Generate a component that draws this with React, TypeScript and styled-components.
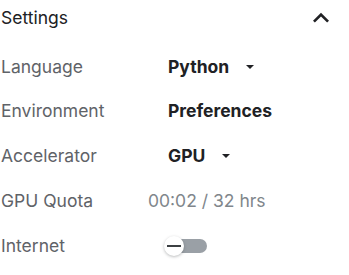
import React, { useState } from 'react';
import styled, { createGlobalStyle } from 'styled-components';

const GlobalStyle = createGlobalStyle`
  body {
    margin: 0;
    background: #ffffff;
    font-family: Inter, 'Noto Sans', sans-serif;
  }
`;

const Panel = styled.section`
  width: 349px;
  padding-left: 1px;
  box-sizing: border-box;
  color: #202124;
`;

const Header = styled.div`
  display: flex;
  align-items: center;
  justify-content: space-between;
  height: 35px;
  margin-bottom: 9.25px;
`;

const Title = styled.h2`
  margin: 0;
  font-size: 17.5px;
  line-height: 24px;
  font-weight: 400;
  color: #202124;
`;

const CollapseButton = styled.button`
  display: flex;
  align-items: center;
  justify-content: center;
  width: 32px;
  height: 32px;
  padding: 0;
  margin-right: 12px;
  border: none;
  background: none;
  color: #202124;
  cursor: pointer;
`;

const Row = styled.div`
  display: grid;
  grid-template-columns: 147px 1fr;
  align-items: center;
  height: 44.75px;
`;

const Label = styled.span`
  font-size: 17.5px;
  line-height: 24px;
  color: #5f6368;
`;

const SelectButton = styled.button`
  display: inline-flex;
  align-items: center;
  justify-self: start;
  gap: 17px;
  padding: 0 0 0 20px;
  border: none;
  background: none;
  font-family: inherit;
  font-size: 17.5px;
  line-height: 24px;
  font-weight: 700;
  color: #202124;
  cursor: pointer;
`;

const Quota = styled.span`
  font-size: 17.5px;
  line-height: 24px;
  color: #80868b;
`;

const Switch = styled.button`
  position: relative;
  justify-self: start;
  width: 43px;
  height: 24px;
  margin-left: 16px;
  padding: 0;
  border: none;
  background: none;
  cursor: pointer;
`;

const Track = styled.span<{ $on: boolean }>`
  position: absolute;
  left: 9px;
  right: 0;
  top: 5px;
  height: 14px;
  border-radius: 7px;
  background: ${(p) => (p.$on ? '#1a73e8' : '#9aa0a6')};
`;

const Knob = styled.span<{ $on: boolean }>`
  position: absolute;
  top: 2px;
  left: ${(p) => (p.$on ? '23px' : '0')};
  width: 20px;
  height: 20px;
  border-radius: 50%;
  background: #ffffff;
  box-shadow: 0 1px 3px rgba(60, 64, 67, 0.35);
  display: flex;
  align-items: center;
  justify-content: center;

  &::after {
    content: '';
    width: 14px;
    height: 2px;
    background: #3c4043;
  }
`;

const Caret = () => (
  <svg width="8" height="4" viewBox="0 0 8 4">
    <path d="M0 0h8L4 4z" fill="#202124" />
  </svg>
);

export default function App() {
  const [internet, setInternet] = useState(false);
  return (
    <>
      <GlobalStyle />
      <Panel>
        <Header>
          <Title>Settings</Title>
          <CollapseButton aria-label="Collapse">
            <svg width="32" height="32" viewBox="0 0 24 24">
              <path d="M12 8l-6 6 1.41 1.41L12 10.83l4.59 4.58L18 14z" fill="currentColor" />
            </svg>
          </CollapseButton>
        </Header>
        <Row>
          <Label>Language</Label>
          <SelectButton>
            Python
            <Caret />
          </SelectButton>
        </Row>
        <Row>
          <Label>Environment</Label>
          <SelectButton>Preferences</SelectButton>
        </Row>
        <Row>
          <Label>Accelerator</Label>
          <SelectButton>
            GPU
            <Caret />
          </SelectButton>
        </Row>
        <Row>
          <Label>GPU Quota</Label>
          <Quota>00:02 / 32 hrs</Quota>
        </Row>
        <Row>
          <Label>Internet</Label>
          <Switch onClick={() => setInternet(!internet)} aria-label="Internet">
            <Track $on={internet} />
            <Knob $on={internet} />
          </Switch>
        </Row>
      </Panel>
    </>
  );
}
